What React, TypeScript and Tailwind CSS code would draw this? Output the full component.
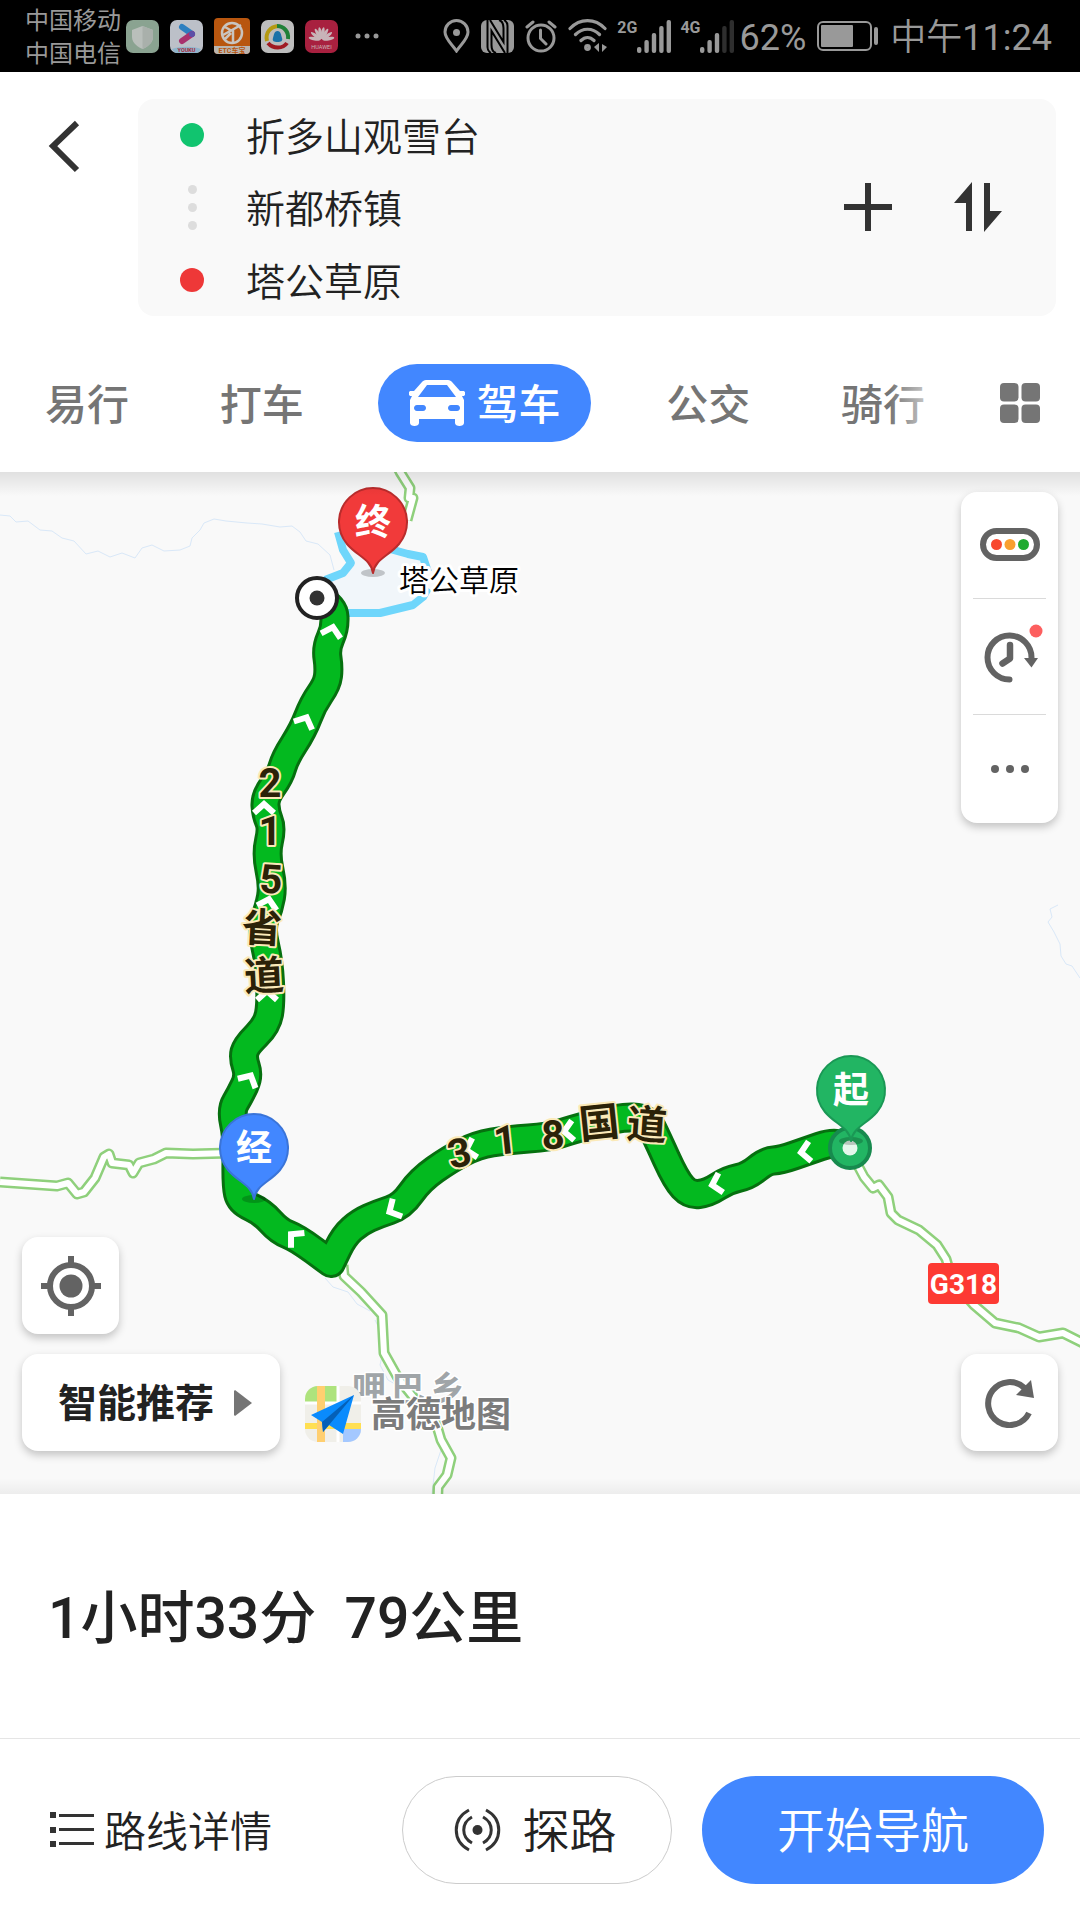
import { useState } from 'react';
import { clsx } from 'clsx';

type Point = [number, number];

// Repeated points keep their corner sharp
const ROUTE_POINTS: Point[] = [
  [318, 599], [334, 606], [335, 628], [326, 648], [329, 668], [327, 684], [313, 704], [303, 730],
  [285, 758], [280, 776], [265, 797], [266, 814], [272, 828], [266, 854], [273, 886], [269, 908],
  [261, 928], [269, 962], [271, 1003], [267, 1025], [246, 1046], [243, 1058], [249, 1076], [240, 1095],
  [231, 1110], [237, 1137], [236, 1185], [240, 1202], [262, 1212], [279, 1231], [297, 1238], [331, 1263],
  [331, 1263], [331, 1263], [344, 1236], [360, 1222], [378, 1214], [402, 1206], [420, 1180], [450, 1159],
  [477, 1145], [507, 1140], [550, 1137], [571, 1130], [619, 1117], [647, 1118], [657, 1138], [676, 1180],
  [690, 1195], [708, 1193], [728, 1180], [748, 1176], [766, 1161], [781, 1160], [807, 1151], [833, 1142],
  [850, 1148],
];

function smoothPath(points: Point[]) {
  const [first, ...rest] = points;
  let d = `M${first[0]} ${first[1]}`;

  rest.forEach(([x, y], i) => {
    const next = rest[i + 1];
    d += next ? ` Q${x} ${y} ${(x + next[0]) / 2} ${(y + next[1]) / 2}` : ` L${x} ${y}`;
  });

  return d;
}

const ROUTE = smoothPath(ROUTE_POINTS);

const MINOR_ROADS = [
  'M0 1182 L57 1186 L68 1183 L77 1194 L84 1192 L95 1178 L104 1157 L109 1154 L112 1163 L129 1165 L133 1173 L139 1163 L154 1159 L166 1153 L193 1154 L230 1153',
  'M343 1265 L344 1276 L361 1292 L382 1315 L384 1353 L398 1378 L414 1398 L436 1423 L441 1440 L451 1458 L447 1475 L438 1487 L437 1520',
  'M855 1160 L864 1177 L873 1188 L879 1185 L888 1197 L891 1213 L898 1220 L919 1230 L937 1245 L946 1259 L952 1280 L974 1305 L995 1323 L1019 1328 L1039 1337 L1063 1333 L1085 1344',
  'M392 455 L400 472 L410 488 L409 498 L413 498 L407 520',
];

const STREAMS = [
  'M0 515 L10 516 L16 522 L28 521 L40 530 L52 531 L62 538 L74 541 L86 554 L98 551 L110 557 L122 553 L135 558 L142 548 L152 545 L164 551 L180 550 L190 546 L192 538 L200 530 L204 523 L214 519 L226 521 L247 523 L262 524 L280 527 L292 526 L300 532 L306 541 L318 544 L330 555 L334 570',
  'M325 1278 L333 1287 L348 1292 L357 1304 L370 1311 M375 1320 L382 1334 M383 1352 L380 1365 L388 1380 L402 1388 L418 1402 M441 1450 L435 1468 L432 1494',
  'M1058 905 L1050 909 L1052 917 L1048 922 L1054 932 L1060 944 L1061 956 L1066 964 L1072 966 L1080 978',
];

const ARROWS: [number, number, number][] = [
  [332, 631, 14],
  [305, 721, 24],
  [264, 808, 0],
  [268, 903, 14],
  [267, 995, 0],
  [249, 1079, 28],
  [294, 1237, -48],
  [393, 1210, -118],
  [470, 1149, -105],
  [568, 1131, -97],
  [716, 1184, -104],
  [805, 1152, -98],
];

interface RoadGlyph {
  char: string;
  x: number;
  y: number;
  rotate: number;
}

const ROAD_LABELS: RoadGlyph[] = [
  { char: '2', x: 270, y: 782, rotate: 0 },
  { char: '1', x: 270, y: 830, rotate: 0 },
  { char: '5', x: 271, y: 878, rotate: 3 },
  { char: '省', x: 262, y: 927, rotate: 3 },
  { char: '道', x: 264, y: 975, rotate: -3 },
  { char: '3', x: 459, y: 1152, rotate: -12 },
  { char: '1', x: 505, y: 1139, rotate: -6 },
  { char: '8', x: 553, y: 1134, rotate: -3 },
  { char: '国', x: 599, y: 1122, rotate: -6 },
  { char: '道', x: 647, y: 1124, rotate: 4 },
];

const STOPS = [
  { label: '起点', value: '折多山观雪台' },
  { label: '途经点', value: '新都桥镇' },
  { label: '终点', value: '塔公草原' },
];

const MODES = ['易行', '打车', '驾车', '公交', '骑行'];

function SignalBars({ label, level }: { label: string; level: number }) {
  return (
    <div className="-ml-0.5 flex h-[33px] items-start">
      <span className="text-base leading-4 font-bold">{label}</span>
      <svg width="34" height="33" viewBox="0 0 34 33" fill="currentColor">
        {[6, 13, 20, 27, 33].map((h, i) => (
          <rect
            key={h}
            x={i * 7.4}
            y={33 - h}
            width="4.4"
            height={h}
            rx="2"
            className={clsx(i >= level && 'opacity-30')}
          />
        ))}
      </svg>
    </div>
  );
}

function StatusBar() {
  return (
    <div className="flex h-[72px] items-center justify-between bg-black pr-[28px] pl-[25px] text-[#999]">
      <div className="flex items-center gap-[11px]">
        <div className="-mr-1.5 pt-1 text-2xl leading-[33px]">
          <div>中国移动</div>
          <div>中国电信</div>
        </div>
        <svg width="33" height="33" viewBox="0 0 33 33">
          <rect width="33" height="33" rx="7" fill="#8aa391" />
          <path d="M16.500 6 L27 10 V17 C27 23 21 27 16.500 29 C12 27 6 23 6 17 V10Z" fill="#b9bfbb" />
          <path d="M16.500 6 L27 10 V17 C27 23 21 27 16.500 29Z" fill="#a9b0ab" />
        </svg>
        <svg width="33" height="33" viewBox="0 0 33 33">
          <rect width="33" height="33" rx="7" fill="#bcc0c8" />
          <path d="M12 7 L22 14" stroke="#2d7fc0" strokeWidth="6" strokeLinecap="round" />
          <path d="M22 14 L12 21" stroke="#a8316e" strokeWidth="6" strokeLinecap="round" />
          <circle cx="22" cy="14" r="3" fill="#5a4fa8" />
          <path d="M2 29 C10 26 23 26 31 29 C30 31 28 33 26 33 H7 C5 33 3 31 2 29Z" fill="#8fb4cc" />
          <text x="16.500" y="32" textAnchor="middle" fontSize="5.500" className="font-bold" fill="#a8283a">
            YOUKU
          </text>
        </svg>
        <svg width="36" height="36" viewBox="0 0 36 36">
          <rect width="36" height="36" rx="4" fill="#b8560f" />
          <path d="M0 28 H36 V32 A4 4 0 0 1 32 36 H4 A4 4 0 0 1 0 32Z" fill="#b9b5b0" />
          <circle cx="18" cy="15" r="10" fill="none" stroke="#c9c4bf" strokeWidth="2.500" />
          <path d="M9 17 L27 7 M11 9 L18 13 M19 12 V25 M11 21 L17 15" stroke="#c9c4bf" strokeWidth="2.500" />
          <text x="18" y="34.500" textAnchor="middle" fontSize="7" className="font-bold" fill="#b8560f">
            ETC车宝
          </text>
        </svg>
        <svg width="33" height="33" viewBox="0 0 33 33" fill="none">
          <rect width="33" height="33" rx="7" fill="#bdbdbd" />
          <path d="M6 21 C4 13 9 7 17 6" stroke="#b59a12" strokeWidth="4" />
          <path d="M16 6 C23 6 28 12 27 19" stroke="#1f8038" strokeWidth="4" />
          <path d="M26 23 C22 29 12 29 7 23" stroke="#a01a22" strokeWidth="4" />
          <path d="M16.500 11 C20 11 20 15 21 18 C22 21 20 22 16.500 22 C13 22 11 21 12 18 C13 15 13 11 16.500 11Z" fill="#1a72a8" />
        </svg>
        <svg width="33" height="33" viewBox="0 0 33 33">
          <rect width="33" height="33" rx="7" fill="#a8203f" />
          <g fill="#c8b4b8">
            {[-80, -54, -30, -10, 10, 30, 54, 80].map((a) => (
              <ellipse key={a} cx="16.500" cy="13" rx="1.700" ry="6" transform={`rotate(${a} 16.500 20)`} />
            ))}
          </g>
          <text x="16.500" y="29" textAnchor="middle" fontSize="5.500" fill="#c8b4b8">
            HUAWEI
          </text>
        </svg>
        <svg width="24" height="6" viewBox="0 0 24 6" fill="currentColor" className="ml-1.5">
          <circle cx="3" cy="3" r="2.500" />
          <circle cx="12" cy="3" r="2.500" />
          <circle cx="21" cy="3" r="2.500" />
        </svg>
      </div>
      <div className="flex items-center gap-[11px]">
        <svg width="27" height="34" viewBox="0 0 27 34">
          <path
            d="M13.500 32 C9 25 2 20 2 13 A11.500 11.500 0 0 1 25 13 C25 20 18 25 13.500 32Z"
            fill="none"
            stroke="currentColor"
            strokeWidth="3"
          />
          <circle cx="13.500" cy="13.500" r="3.500" fill="currentColor" />
        </svg>
        <svg width="33" height="33" viewBox="0 0 33 33" fill="none" stroke="#000" strokeWidth="2">
          <rect width="33" height="33" rx="6" fill="currentColor" stroke="none" />
          <path d="M6.500 0 V27 C6.500 30 8 32 10 33" />
          <path d="M9 0 L22.500 22 V8 C22.500 4 21 1 18 0" />
          <path d="M24 33 L10.500 11 V25 C10.500 29 12 32 15 33" />
          <path d="M26.500 33 V6 C26.500 3 25 1 23 0" />
        </svg>
        <svg width="32" height="33" viewBox="0 0 32 33" fill="none" stroke="currentColor" strokeWidth="3">
          <circle cx="16" cy="18" r="13" />
          <path d="M15.500 10 V18.500 L21 24 M2 7 L8 2 M30 7 L24 2" strokeLinecap="round" />
        </svg>
        <svg width="40" height="34" viewBox="0 0 40 34" fill="none" stroke="currentColor" strokeWidth="3.200" strokeLinecap="round">
          <path d="M2 9.500 C12 -1 27 -1 37 9.500 M7.500 15.500 C14.500 8.500 24.500 8.500 31.500 15.500 M13 21.500 C17 17.500 22 17.500 26 21.500" />
          <circle cx="19.500" cy="28.500" r="1.800" />
          <path d="M26 28 L31 24 V33Z M39 28 L34 25 V33Z" fill="currentColor" stroke="none" />
        </svg>
        <SignalBars label="2G" level={5} />
        <SignalBars label="4G" level={3} />
        <span className="-ml-1.5 pt-1 text-4xl leading-none">62%</span>
        <svg width="62" height="30" viewBox="0 0 62 30">
          <rect x="1" y="1" width="53" height="28" rx="5" fill="none" stroke="currentColor" strokeWidth="2" />
          <rect x="4" y="4" width="32" height="22" rx="1" fill="currentColor" />
          <rect x="57" y="6" width="4" height="18" rx="2" fill="currentColor" />
        </svg>
        <span className="pt-1 text-4xl leading-none">
          <span className="font-[350]">中午</span>11:24
        </span>
      </div>
    </div>
  );
}

function SearchPanel() {
  return (
    <div className="flex items-start pt-[27px] pr-6">
      <button type="button" aria-label="返回" className="flex w-[138px] shrink-0 py-5 pl-[48px]">
        <svg width="32" height="54" viewBox="0 0 32 54" fill="none">
          <path d="M29 4 L5 27 L29 51" stroke="#333" strokeWidth="6" />
        </svg>
      </button>
      <div className="flex flex-1 items-center rounded-2xl bg-[#f9f9f9]">
        <div className="flex-1">
          {STOPS.map((stop, i) => (
            <label key={stop.label} className="flex h-[72px] items-center last:h-[73px]">
              <span className="flex w-[108px] shrink-0 flex-col items-center gap-[9px]">
                {i === 0 && <span className="size-6 rounded-full bg-[#11c46f]" />}
                {i === 1 && [0, 1, 2].map((n) => <span key={n} className="size-[9px] rounded-full bg-[#ddd]" />)}
                {i === 2 && <span className="size-6 rounded-full bg-[#ee3838]" />}
              </span>
              <input
                type="text"
                aria-label={stop.label}
                defaultValue={stop.value}
                className="h-full w-full min-w-0 bg-transparent pb-0.5 text-[39px] font-[350] text-[#222] outline-none"
              />
            </label>
          ))}
        </div>
        <div className="flex shrink-0 gap-[60px] pr-[53px] pb-0.5">
          <button type="button" aria-label="添加途经点">
            <svg width="50" height="50" viewBox="0 0 50 50">
              <path d="M25 1 V49 M1 25 H49" stroke="#333" strokeWidth="6" />
            </svg>
          </button>
          <button type="button" aria-label="交换起终点">
            <svg width="50" height="50" viewBox="0 0 50 50" fill="#333">
              <path d="M19 0 V49 H13 V21 H1Z M31 1 H37 V29 H49 L31 50Z" />
            </svg>
          </button>
        </div>
      </div>
    </div>
  );
}

function CarIcon() {
  return (
    <svg width="56" height="46" viewBox="0 0 56 46">
      <path
        fill="#fff"
        fillRule="evenodd"
        d="M17 0 H39 C41 0 42 1 43 2 L51 11 H54 C57 11 57 16 54 16 H53 L55 20 V43 C55 47 46 47 46 43 V39 H10 V43 C10 47 1 47 1 43 V20 L3 16 H2 C-1 16 -1 11 2 11 H5 L13 2 C14 1 15 0 17 0Z M18 5 L9 17 H47 L38 5Z M8 25 C4 25 4 31 8 31 H14 C18 31 18 25 14 25Z M42 25 C38 25 38 31 42 31 H48 C52 31 52 25 48 25Z"
      />
    </svg>
  );
}

function ModeTabs() {
  const [mode, setMode] = useState('驾车');

  return (
    <nav className="flex items-center pt-[48px] pr-10 pb-[30px] pl-[45px]">
      <div className="relative flex flex-1 items-center justify-between">
        {MODES.map((m) => (
          <button
            key={m}
            type="button"
            onClick={() => setMode(m)}
            className={clsx(
              'h-[78px] text-[42px] font-medium whitespace-nowrap',
              m === mode
                ? '-mx-4 flex items-center gap-[11px] rounded-full bg-[#4287ff] px-[31px] text-white'
                : 'text-[#757575]',
            )}
          >
            {m === mode && <CarIcon />}
            <span className="block pt-1">{m}</span>
          </button>
        ))}
        <div className="pointer-events-none absolute inset-y-0 -right-7 w-16 bg-linear-to-r from-white/0 to-white" />
      </div>
      <button type="button" aria-label="更多出行方式" className="ml-[75px]">
        <svg width="40" height="40" viewBox="0 0 40 40" fill="#757575">
          <rect width="18.500" height="18.500" rx="4" />
          <rect x="21.500" width="18.500" height="18.500" rx="4" />
          <rect y="21.500" width="18.500" height="18.500" rx="4" />
          <rect x="21.500" y="21.500" width="18.500" height="18.500" rx="4" />
        </svg>
      </button>
    </nav>
  );
}

interface PinProps {
  x: number;
  y: number;
  label: string;
  fill: string;
  stroke: string;
}

function Pin({ x, y, label, fill, stroke }: PinProps) {
  return (
    <g transform={`translate(${x} ${y})`}>
      <ellipse cx="0" cy="51" rx="12" ry="4" fill="#000" fillOpacity="0.2" />
      <path
        d="M0 51 C-2 37 -16 34 -26 22 A34 34 0 1 1 26 22 C16 34 2 37 0 51Z"
        fill={fill}
        stroke={stroke}
        strokeWidth="2"
      />
      <text y="13" textAnchor="middle" fontSize="36" className="font-bold" fill="#fff">
        {label}
      </text>
    </g>
  );
}

function MapCanvas() {
  return (
    <svg
      viewBox="0 472 1080 1022"
      preserveAspectRatio="xMidYMid slice"
      className="absolute inset-0 h-full w-full"
      fill="none"
      strokeLinejoin="round"
    >
      {STREAMS.map((d) => (
        <path key={d} d={d} stroke="#d9e8f8" strokeWidth="1" />
      ))}
      {MINOR_ROADS.map((d) => (
        <g key={d}>
          <path d={d} stroke="#8fd07c" strokeWidth="11" />
          <path d={d} stroke="#fff" strokeWidth="6" />
        </g>
      ))}

      {/* lake */}
      <path
        d="M338 532 L343 550 L351 562 L343 573 L327 580 L347 613 L380 613 L413 605 L425 595 L427 570 L423 558 L410 553 L393 550Z"
        fill="#f1f6fa"
      />
      <path d="M338 532 L343 550 L351 563 L343 573 L325 580" stroke="#6fd6fb" strokeWidth="8" />
      <path d="M390 549 L408 554 L423 557 L428 572 M428 588 L423 597 L413 605 L380 613 L340 613" stroke="#6fd6fb" strokeWidth="8" />

      <path d={ROUTE} stroke="#06700f" strokeWidth="30" />
      <path d={ROUTE} stroke="#03b91f" strokeWidth="24" />
      {ARROWS.map(([x, y, angle]) => (
        <path
          key={`${x}-${y}`}
          d="M-10 5 L0 -4 L10 5"
          transform={`translate(${x} ${y}) rotate(${angle})`}
          stroke="#fff"
          strokeWidth="6"
          strokeLinejoin="miter"
        />
      ))}

      <circle cx="317" cy="598" r="20" fill="#fff" stroke="#222" strokeWidth="4" />
      <circle cx="317" cy="598" r="7.500" fill="#333" />
      <circle cx="850" cy="1148" r="20" fill="#22b563" stroke="#178a4e" strokeWidth="4" />
      <circle cx="850" cy="1148" r="7.500" fill="#e4f7ec" />

      <Pin x={373} y={522} label="终" fill="#f13a3a" stroke="#b92c2c" />
      <Pin x={254} y={1148} label="经" fill="#4287ff" stroke="#3a74d8" />
      <Pin x={851} y={1090} label="起" fill="#22b563" stroke="#1a9855" />

      <g className="font-bold" fontSize="40" textAnchor="middle" fill="#2b2208" stroke="#fbeab8" strokeWidth="4" paintOrder="stroke">
        {ROAD_LABELS.map(({ char, x, y, rotate }) => (
          <text key={`${char}-${x}`} transform={`translate(${x} ${y}) rotate(${rotate})`} y="15">
            {char}
          </text>
        ))}
      </g>

      <text x="399" y="591" fontSize="30" className="font-[350]" fill="#000" stroke="#fff" strokeWidth="6" paintOrder="stroke">
        塔公草原
      </text>
      <text x="352 391 430" y="1401" fontSize="34" className="font-bold" fill="#a0a5a8" stroke="#fff" strokeWidth="3" paintOrder="stroke">
        呷巴乡
      </text>

      <rect x="928" y="1263" width="71" height="41" rx="4" fill="#fd3a33" />
      <text x="963.500" y="1294" textAnchor="middle" fontSize="28" className="font-bold" fill="#fff">
        G318
      </text>

      {/* provider logo */}
      <g transform="translate(305 1386)">
        <rect width="56" height="56" rx="13" fill="#f0efe9" />
        <path d="M13 0 H33 V17 H0 V13 A13 13 0 0 1 13 0Z" fill="#aee37d" />
        <path d="M38 43 H56 A13 13 0 0 1 43 56 H38Z" fill="#a4c8ff" />
        <path d="M0 17 H56 M33 0 V56" stroke="#fff" strokeWidth="3" />
        <path d="M0 40 H56" stroke="#ffdf52" strokeWidth="6" />
        <path d="M16 0 V56" stroke="#ffcf70" strokeWidth="8" />
        <path d="M49 9 L6 29 L17 36 L18 46 L24 39 L38 48Z" fill="#0a8bfd" />
        <path d="M49 9 L17 36 L18 46 L24 39Z" fill="#0560b8" />
      </g>
      <text x="371" y="1427" fontSize="35" className="font-bold" fill="#7c7c7c" stroke="#fff" strokeWidth="3" paintOrder="stroke">
        高德地图
      </text>
    </svg>
  );
}

const floating = 'bg-white shadow-[0_4px_8px_rgba(0,0,0,0.22)]';

function MapSection() {
  return (
    <main className="relative flex flex-1 flex-col justify-between overflow-hidden bg-[#f9f9f9] px-[22px] pt-5 pb-[43px]">
      <MapCanvas />
      <div className="pointer-events-none absolute inset-x-0 top-0 h-6 bg-linear-to-b from-black/10 to-transparent" />
      <div className="pointer-events-none absolute inset-x-0 bottom-0 h-4 bg-linear-to-t from-black/5 to-transparent" />

      <div className={clsx('relative flex w-[97px] flex-col self-end rounded-2xl px-3', floating)}>
        <button type="button" aria-label="路况" className="flex h-[106px] items-center justify-center">
          <svg width="60" height="34" viewBox="0 0 60 34">
            <rect x="3" y="3" width="54" height="27" rx="13.500" fill="#fff" stroke="#636363" strokeWidth="6" />
            <circle cx="16.500" cy="16.500" r="5.500" fill="#f8482f" />
            <circle cx="30" cy="16.500" r="5.500" fill="#f9a02f" />
            <circle cx="43.500" cy="16.500" r="5.500" fill="#1fab30" />
          </svg>
        </button>
        <button
          type="button"
          aria-label="出发时间"
          className="flex h-[117px] items-center justify-center border-y border-[#dadada] pb-1"
        >
          <svg
            width="60"
            height="62"
            viewBox="0 0 60 62"
            fill="none"
            stroke="#636363"
            strokeWidth="6"
            strokeLinecap="round"
            className="overflow-visible"
          >
            <path d="M29.500 55.500 A22 22 0 1 1 51.500 34" />
            <path d="M30 21 V34.500 L22.500 39.500" strokeWidth="6.500" strokeLinejoin="round" />
            <path d="M44 34 H58 L51.500 43.500Z" fill="#636363" stroke="none" />
            <circle cx="56" cy="7" r="6.500" fill="#fd5f5f" stroke="none" />
          </svg>
        </button>
        <button type="button" aria-label="更多" className="flex h-[108px] items-center justify-center">
          <svg width="38" height="8" viewBox="0 0 38 8" fill="#636363">
            <circle cx="4" cy="4" r="4" />
            <circle cx="19" cy="4" r="4" />
            <circle cx="34" cy="4" r="4" />
          </svg>
        </button>
      </div>

      <div className="relative flex items-end justify-between">
        <div className="flex flex-col items-start gap-5">
          <button
            type="button"
            aria-label="定位"
            className={clsx('flex size-[97px] items-center justify-center rounded-2xl', floating)}
          >
            <svg width="60" height="60" viewBox="0 0 60 60" fill="none" stroke="#636363" strokeWidth="6">
              <circle cx="30" cy="30" r="21" />
              <circle cx="30" cy="30" r="11.500" fill="#636363" stroke="none" />
              <path d="M30 0 V9 M30 51 V60 M0 30 H9 M51 30 H60" />
            </svg>
          </button>
          <button
            type="button"
            className={clsx(
              'flex h-[97px] items-center gap-5 rounded-2xl pr-7 pl-[36px] text-[39px] font-bold text-[#222]',
              floating,
            )}
          >
            <span className="pt-1">智能推荐</span>
            <svg width="18" height="26" viewBox="0 0 18 26" fill="#757575">
              <path d="M0 1 L1 0 L18 13 L1 26 L0 25Z" />
            </svg>
          </button>
        </div>
        <button
          type="button"
          aria-label="刷新路线"
          className={clsx('flex size-[97px] items-center justify-center rounded-2xl', floating)}
        >
          <svg width="50" height="50" viewBox="0 0 50 50">
            <path d="M44 35 A21.500 21.500 0 1 1 39.500 10" fill="none" stroke="#636363" strokeWidth="6" />
            <path d="M46 2 L49 20 L31 17Z" fill="#636363" />
          </svg>
        </button>
      </div>
    </main>
  );
}

function RouteFooter() {
  return (
    <footer className="bg-white text-[#222]">
      <h1 className="border-b border-[#e5e5e5] pt-[85px] pb-[79px] pl-[48px] text-[57px] leading-[80px] font-medium whitespace-pre">
        {'1小时33分  79公里'}
      </h1>
      <div className="flex items-center pt-[37px] pr-9 pb-9 pl-[49px]">
        <button type="button" className="flex items-center gap-2.5 text-[42px] font-[350] whitespace-nowrap">
          <svg width="45" height="36" viewBox="0 0 45 36" fill="#333">
            <path d="M1 0 H7 V6 H1Z M1 15 H7 V21 H1Z M1 29 H7 V35 H1Z M10 2 H45 V5 H10Z M10 16 H45 V19 H10Z M10 30 H45 V33 H10Z" />
          </svg>
          <span className="pt-1">路线详情</span>
        </button>
        <button
          type="button"
          className="ml-auto flex h-[108px] w-[270px] items-center justify-center gap-[22px] rounded-full border border-[#ccc] pr-1 text-[47px] font-[350]"
        >
          <svg width="47" height="44" viewBox="0 0 47 44" fill="none" stroke="#333" strokeWidth="3">
            <circle cx="23.500" cy="22" r="5" fill="#333" stroke="none" />
            <path d="M15 2 C-2 11 -2 33 15 42 M32 2 C49 11 49 33 32 42" />
            <path d="M18 9 C7 15 7 29 18 35 M29 9 C40 15 40 29 29 35" />
          </svg>
          <span className="pt-1">探路</span>
        </button>
        <button
          type="button"
          className="ml-[30px] h-[108px] w-[342px] rounded-full bg-[#4287ff] pt-1 text-5xl font-[350] text-white"
        >
          开始导航
        </button>
      </div>
    </footer>
  );
}

export default function App() {
  return (
    <div className="flex min-h-screen flex-col bg-white font-[Roboto,'Noto_Sans_CJK_SC',sans-serif]">
      <StatusBar />
      <header className="bg-white">
        <SearchPanel />
        <ModeTabs />
      </header>
      <MapSection />
      <RouteFooter />
    </div>
  );
}
